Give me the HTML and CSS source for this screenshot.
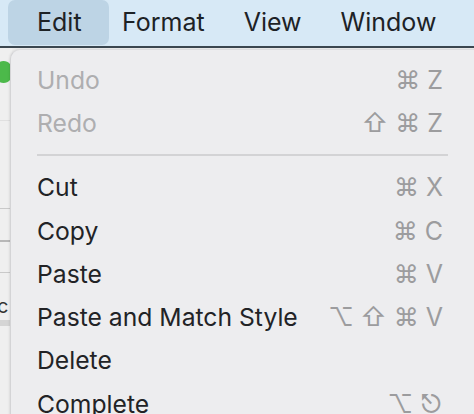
FILE: index.html
```html
<!DOCTYPE html>
<html>
<head>
<meta charset="utf-8">
<link rel="stylesheet" href="styles.css">
</head>
<body>
<div class="menubar">
  <div class="mb-item active">Edit</div>
  <div class="mb-item format">Format</div>
  <div class="mb-item view">View</div>
  <div class="mb-item window">Window</div>
</div>
<div class="backdrop">
  <div class="green"></div>
  <div class="line l1"></div>
  <div class="line l2"></div>
  <div class="line l3"></div>
  <div class="line l4"></div>
  <div class="bc">c</div>
  <div class="line l5"></div>
</div>
<div class="menu">
  <div class="row disabled"><span class="label">Undo</span><span class="keys"><span class="k">⌘</span><span class="k">Z</span></span></div>
  <div class="row disabled"><span class="label">Redo</span><span class="keys"><span class="k shift">⇧</span><span class="k">⌘</span><span class="k">Z</span></span></div>
  <div class="sep"></div>
  <div class="row"><span class="label">Cut</span><span class="keys"><span class="k">⌘</span><span class="k">X</span></span></div>
  <div class="row"><span class="label">Copy</span><span class="keys"><span class="k">⌘</span><span class="k">C</span></span></div>
  <div class="row"><span class="label">Paste</span><span class="keys"><span class="k">⌘</span><span class="k">V</span></span></div>
  <div class="row"><span class="label">Paste and Match Style</span><span class="keys"><span class="k opt">⌥</span><span class="k shift">⇧</span><span class="k">⌘</span><span class="k">V</span></span></div>
  <div class="row"><span class="label">Delete</span><span class="keys"></span></div>
  <div class="row"><span class="label">Complete</span><span class="keys"><span class="k opt">⌥</span><span class="k">⎋</span></span></div>
</div>
</body>
</html>
```
FILE: styles.css
```css
* { box-sizing: border-box; }
html, body { margin: 0; padding: 0; }
body {
  width: 474px;
  height: 414px;
  overflow: hidden;
  position: relative;
  background: #ececec;
  font-family: Inter, "Liberation Sans", sans-serif;
}
.menubar {
  height: 48px;
  background: #d7e9f6;
  border-bottom: 2px solid #3b4750;
  display: flex;
  align-items: flex-start;
  padding-left: 8px;
  color: #1d2226;
  font-size: 25px;
}
.mb-item {
  height: 45px;
  line-height: 44px;
}
.mb-item.active {
  background: #bdd4e5;
  border-radius: 7px;
  width: 101px;
  padding-left: 29px;
}
.format { margin-left: 13px; }
.view { margin-left: 39px; }
.window { margin-left: 39px; }
.backdrop {
  position: absolute;
  left: 0;
  top: 48px;
  width: 12px;
  height: 366px;
  background: #efefef;
}
.green {
  position: absolute;
  left: -6px;
  top: 13px;
  width: 19px;
  height: 22px;
  border-radius: 50%;
  background: #4cb94a;
}
.line { position: absolute; left: 0; width: 12px; height: 1px; background: #c9c9c9; }
.l1 { top: 72px; background: #e0e0e0; }
.l2 { top: 160px; }
.l3 { top: 192px; height: 2px; background: #b8b8b8; }
.l4 { top: 224px; }
.l5 { top: 272px; height: 6px; background: #d5d5d5; }
.bc {
  position: absolute;
  left: -3px;
  top: 246px;
  font-size: 20px;
  color: #333;
}
.menu {
  position: absolute;
  left: 10px;
  top: 49px;
  width: 480px;
  height: 380px;
  background: #ededef;
  border-top-left-radius: 10px;
  border-left: 1px solid #d4d4d6;
  border-top: 1px solid #dcdcde;
  box-shadow: -1px 0 2px rgba(0,0,0,0.08);
  padding: 8px 0 0 26px;
}
.row {
  display: flex;
  justify-content: space-between;
  align-items: center;
  height: 43.3px;
  font-size: 24.7px;
  color: #222326;
  width: 406px;
}
.row.disabled .label { color: #aeaeb0; }
.keys {
  display: flex;
  align-items: baseline;
  gap: 7px;
  color: #9c9c9e;
  font-size: 25px;
}
.k { display: inline-block; text-align: center; }
.k.shift { font-size: 26px; line-height: 1; }
.k.opt { margin-right: -1px; }
.sep {
  height: 21px;
  width: 411px;
  display: flex;
  align-items: center;
}
.sep::before {
  content: "";
  display: block;
  width: 100%;
  height: 2px;
  background: #d3d3d5;
}
```
